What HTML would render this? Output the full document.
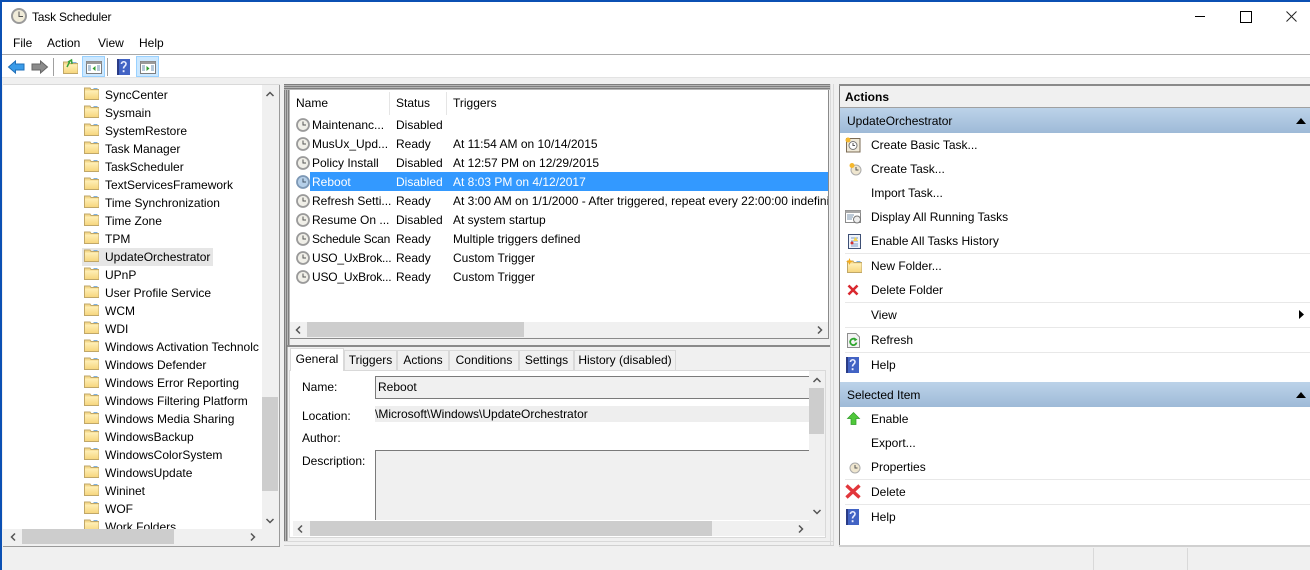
<!DOCTYPE html>
<html><head><meta charset="utf-8"><title>Task Scheduler</title>
<style>
html,body{margin:0;padding:0;width:1310px;height:570px;overflow:hidden;background:#f0f0f0}
body{position:relative;font:12px/16px "Liberation Sans",sans-serif;color:#000}
.a{position:absolute}
.t{position:absolute;white-space:nowrap}
.f{position:absolute;left:83px;width:15px;height:13px}
svg{position:absolute;overflow:visible}
.ln{position:absolute;background:#e8e8e8;height:1px;left:845px;right:0}
.gh{position:absolute;left:840px;right:0;height:25px;background:linear-gradient(#bcd3e9,#9ebad7)}
.sb{position:absolute;background:#f0f0f0}
.th{position:absolute;background:#cdcdcd}
.tab{position:absolute;top:350px;height:20px;background:#f0f0f0;border:1px solid #d9d9d9;border-bottom:none;box-sizing:border-box;text-align:center;line-height:19px}
</style></head><body>
<svg width="0" height="0" style="position:absolute"><defs>
<linearGradient id="fg" x1="0" y1="0" x2="0" y2="1"><stop offset="0" stop-color="#fff0b8"/><stop offset="1" stop-color="#f7d67f"/></linearGradient>
<symbol id="fd" viewBox="0 0 15 13"><path d="M.5 12.500V1h5.500l1 1.500h8v10z" fill="#f5d98c" stroke="#c0a768"/><path d="M1 3.500h13.500v8.500H1z" fill="url(#fg)"/><path d="M9.500 1h4v1h-4z" fill="#7fb2df"/></symbol>
<symbol id="ck" viewBox="0 0 14 14"><circle cx="7" cy="7" r="6" fill="#f0efe8" stroke="#9a9a9a" stroke-width="1.800"/><path d="M7 3.500V7H10" fill="none" stroke="#555" stroke-width="1"/></symbol>
<symbol id="qm" viewBox="0 0 13 16"><rect width="13" height="16" fill="#4263c4"/><rect x="0" width="2" height="16" fill="#2a3c86"/><path d="M4.500 5c0-3 4.500-3 4.500 0 0 2-2.500 2-2.500 4.500" fill="none" stroke="#e8ecff" stroke-width="1.600"/><rect x="5.700" y="11.200" width="1.800" height="2" fill="#e8ecff"/></symbol>
</defs></svg>

<!-- window frame -->
<div class="a" style="left:0;top:0;width:1310px;height:2px;background:#0b50b3"></div>
<div class="a" style="left:0;top:0;width:2px;height:570px;background:#0b50b3"></div>
<div class="a" style="left:2px;top:2px;width:1308px;height:76px;background:#fff"></div>
<div class="a" style="left:2px;top:54px;width:1308px;height:1px;background:#a9a9a9"></div>
<div class="a" style="left:2px;top:77px;width:1308px;height:1px;background:#e3e3e3"></div>

<svg style="left:11px;top:8px" width="16" height="16" viewBox="0 0 16 16"><circle cx="8" cy="8" r="7" fill="#f1ecd9" stroke="#9a9a9a" stroke-width="2"/><path d="M8 3.500V8.500H12" fill="none" stroke="#555"/></svg>
<div class="t" style="left:32px;top:9px;letter-spacing:-.2px">Task Scheduler</div>
<div class="t" style="left:13px;top:35px">File</div>
<div class="t" style="left:47px;top:35px">Action</div>
<div class="t" style="left:98px;top:35px">View</div>
<div class="t" style="left:139px;top:35px">Help</div>

<!-- window buttons -->
<div class="a" style="left:1195px;top:16px;width:10px;height:1px;background:#000"></div>
<div class="a" style="left:1240px;top:11px;width:10px;height:10px;border:1px solid #000"></div>
<svg style="left:1286px;top:11px" width="11" height="11"><path d="M.5.500L10.500 10.500M10.500.500L.5 10.500" stroke="#222"/></svg>

<!-- toolbar -->
<svg style="left:8px;top:60px" width="17" height="14" viewBox="0 0 17 14"><path d="M.5 7L7.500 1V4H16V10H7.500V13z" fill="#3a9be8" stroke="#1f6fb8"/></svg>
<svg style="left:31px;top:60px" width="17" height="14" viewBox="0 0 17 14"><path d="M16.500 7L9.500 1V4H1V10H9.500V13z" fill="#8b8b8b" stroke="#666"/></svg>
<div class="a" style="left:53px;top:58px;width:1px;height:18px;background:#a0a0a0"></div>
<svg style="left:63px;top:61px" width="15" height="13"><use href="#fd"/></svg>
<svg style="left:66px;top:59px" width="8" height="9"><path d="M1 8L4 2M2 3L5.500 1L6 5" fill="none" stroke="#3aa33a" stroke-width="1.500"/></svg>
<div class="a" style="left:82px;top:56px;width:23px;height:21px;background:#cce8ff;border:1px solid #99d1ff;box-sizing:border-box"></div>
<svg style="left:86px;top:61px" width="16" height="13" viewBox="0 0 16 13"><rect x=".5" y=".5" width="15" height="12" fill="#fff" stroke="#7d7d7d"/><rect x=".5" y=".5" width="15" height="2.500" fill="#9a9a9a"/><path d="M2 5h3M2 7h3M2 9h3M11 5h3M11 7h3M11 9h3" stroke="#6a8fb0"/><path d="M9.500 5V10L6.500 7.500z" fill="#2f9e2f"/></svg>
<div class="a" style="left:107px;top:58px;width:1px;height:18px;background:#a0a0a0"></div>
<svg style="left:117px;top:59px" width="13" height="16"><use href="#qm"/></svg>
<div class="a" style="left:136px;top:56px;width:23px;height:21px;background:#cce8ff;border:1px solid #99d1ff;box-sizing:border-box"></div>
<svg style="left:140px;top:61px" width="16" height="13" viewBox="0 0 16 13"><rect x=".5" y=".5" width="15" height="12" fill="#fff" stroke="#7d7d7d"/><rect x=".5" y=".5" width="15" height="2.500" fill="#9a9a9a"/><path d="M2 5h3M2 7h3M2 9h3M11 5h3M11 7h3M11 9h3" stroke="#6a8fb0"/><path d="M6.500 5V10L9.500 7.500z" fill="#2f9e2f"/></svg>

<!-- left tree -->
<div class="a" style="left:3px;top:85px;width:259px;height:444px;background:#fff;overflow:hidden" id="tree">
<div class="a" style="left:79px;top:163px;width:131px;height:18px;background:#e6e6e6"></div>
<style>.r{position:absolute;left:102px;white-space:nowrap;margin-top:1px}#tree .f{left:81px}</style>
<svg class="f" style="top:2px"><use href="#fd"/></svg><div class="r" style="top:1px">SyncCenter</div>
<svg class="f" style="top:20px"><use href="#fd"/></svg><div class="r" style="top:19px">Sysmain</div>
<svg class="f" style="top:38px"><use href="#fd"/></svg><div class="r" style="top:37px">SystemRestore</div>
<svg class="f" style="top:56px"><use href="#fd"/></svg><div class="r" style="top:55px">Task Manager</div>
<svg class="f" style="top:74px"><use href="#fd"/></svg><div class="r" style="top:73px">TaskScheduler</div>
<svg class="f" style="top:92px"><use href="#fd"/></svg><div class="r" style="top:91px">TextServicesFramework</div>
<svg class="f" style="top:110px"><use href="#fd"/></svg><div class="r" style="top:109px">Time Synchronization</div>
<svg class="f" style="top:128px"><use href="#fd"/></svg><div class="r" style="top:127px">Time Zone</div>
<svg class="f" style="top:146px"><use href="#fd"/></svg><div class="r" style="top:145px">TPM</div>
<svg class="f" style="top:164px"><use href="#fd"/></svg><div class="r" style="top:163px">UpdateOrchestrator</div>
<svg class="f" style="top:182px"><use href="#fd"/></svg><div class="r" style="top:181px">UPnP</div>
<svg class="f" style="top:200px"><use href="#fd"/></svg><div class="r" style="top:199px">User Profile Service</div>
<svg class="f" style="top:218px"><use href="#fd"/></svg><div class="r" style="top:217px">WCM</div>
<svg class="f" style="top:236px"><use href="#fd"/></svg><div class="r" style="top:235px">WDI</div>
<svg class="f" style="top:254px"><use href="#fd"/></svg><div class="r" style="top:253px">Windows Activation Technolc</div>
<svg class="f" style="top:272px"><use href="#fd"/></svg><div class="r" style="top:271px">Windows Defender</div>
<svg class="f" style="top:290px"><use href="#fd"/></svg><div class="r" style="top:289px">Windows Error Reporting</div>
<svg class="f" style="top:308px"><use href="#fd"/></svg><div class="r" style="top:307px">Windows Filtering Platform</div>
<svg class="f" style="top:326px"><use href="#fd"/></svg><div class="r" style="top:325px">Windows Media Sharing</div>
<svg class="f" style="top:344px"><use href="#fd"/></svg><div class="r" style="top:343px">WindowsBackup</div>
<svg class="f" style="top:362px"><use href="#fd"/></svg><div class="r" style="top:361px">WindowsColorSystem</div>
<svg class="f" style="top:380px"><use href="#fd"/></svg><div class="r" style="top:379px">WindowsUpdate</div>
<svg class="f" style="top:398px"><use href="#fd"/></svg><div class="r" style="top:397px">Wininet</div>
<svg class="f" style="top:416px"><use href="#fd"/></svg><div class="r" style="top:415px">WOF</div>
<svg class="f" style="top:434px"><use href="#fd"/></svg><div class="r" style="top:433px">Work Folders</div>
</div>
<div class="sb" style="left:262px;top:85px;width:16px;height:444px"></div>
<div class="th" style="left:262px;top:397px;width:16px;height:94px"></div>
<svg style="left:266px;top:91px" width="8" height="6"><path d="M.5 5L4 1.500 7.500 5" fill="none" stroke="#555" stroke-width="1.500"/></svg>
<svg style="left:266px;top:518px" width="8" height="6"><path d="M.5 1L4 4.500 7.500 1" fill="none" stroke="#555" stroke-width="1.500"/></svg>
<div class="sb" style="left:3px;top:529px;width:275px;height:16px"></div>
<div class="th" style="left:22px;top:529px;width:152px;height:15px"></div>
<svg style="left:10px;top:533px" width="6" height="8"><path d="M5 .5L1.500 4 5 7.500" fill="none" stroke="#555" stroke-width="1.500"/></svg>
<svg style="left:250px;top:533px" width="6" height="8"><path d="M1 .5L4.500 4 1 7.500" fill="none" stroke="#555" stroke-width="1.500"/></svg>
<div class="a" style="left:3px;top:546px;width:277px;height:1px;background:#9a9a9a"></div>
<div class="a" style="left:279px;top:84px;width:1px;height:463px;background:#9a9a9a"></div>
<div class="a" style="left:3px;top:84px;width:277px;height:1px;background:#d9d9d9"></div>

<!-- center panel frame -->
<div class="a" style="left:284px;top:84px;width:6px;height:262px;background:repeating-linear-gradient(90deg,#7e7e7e 0 1px,#b5b5b5 1px 2px)"></div>
<div class="a" style="left:284px;top:346px;width:4px;height:195px;background:repeating-linear-gradient(90deg,#7e7e7e 0 1px,#b5b5b5 1px 2px)"></div>
<div class="a" style="left:284px;top:84px;width:546px;height:6px;background:repeating-linear-gradient(180deg,#7e7e7e 0 1px,#b5b5b5 1px 2px)"></div>
<div class="a" style="left:290px;top:90px;width:538px;height:248px;background:#fff;overflow:hidden" id="list">
<style>
#list .t{line-height:16px}
.c1{left:22px}.c2{left:106px}.c3{left:163px}
</style>
<div class="a" style="left:99px;top:2px;width:1px;height:23px;background:#e5e5e5"></div>
<div class="a" style="left:156px;top:2px;width:1px;height:23px;background:#e5e5e5"></div>
<div class="t" style="left:6px;top:5px">Name</div><div class="t c2" style="top:5px">Status</div><div class="t c3" style="top:5px">Triggers</div>
<div class="a" style="left:20px;top:82px;width:519px;height:19px;background:#3399ff"></div>
<svg style="left:6px;top:28px" width="14" height="14"><use href="#ck"/></svg><div class="t c1" style="top:27px">Maintenanc...</div><div class="t c2" style="top:27px">Disabled</div>
<svg style="left:6px;top:47px" width="14" height="14"><use href="#ck"/></svg><div class="t c1" style="top:46px">MusUx_Upd...</div><div class="t c2" style="top:46px">Ready</div><div class="t c3" style="top:46px">At 11:54 AM on 10/14/2015</div>
<svg style="left:6px;top:66px" width="14" height="14"><use href="#ck"/></svg><div class="t c1" style="top:65px">Policy Install</div><div class="t c2" style="top:65px">Disabled</div><div class="t c3" style="top:65px">At 12:57 PM on 12/29/2015</div>
<svg style="left:6px;top:85px" width="14" height="14"><circle cx="7" cy="7" r="6" fill="#b5cfe8" stroke="#7d98b5" stroke-width="1.800"/><path d="M7 3.500V7H10" fill="none" stroke="#456"/></svg><div class="t c1" style="top:84px;color:#fff">Reboot</div><div class="t c2" style="top:84px;color:#fff">Disabled</div><div class="t c3" style="top:84px;color:#fff">At 8:03 PM on 4/12/2017</div>
<svg style="left:6px;top:104px" width="14" height="14"><use href="#ck"/></svg><div class="t c1" style="top:103px">Refresh Setti...</div><div class="t c2" style="top:103px">Ready</div><div class="t c3" style="top:103px">At 3:00 AM on 1/1/2000 - After triggered, repeat every 22:00:00 indefinitely.</div>
<svg style="left:6px;top:123px" width="14" height="14"><use href="#ck"/></svg><div class="t c1" style="top:122px">Resume On ...</div><div class="t c2" style="top:122px">Disabled</div><div class="t c3" style="top:122px">At system startup</div>
<svg style="left:6px;top:142px" width="14" height="14"><use href="#ck"/></svg><div class="t c1" style="top:141px;letter-spacing:-.2px">Schedule Scan</div><div class="t c2" style="top:141px">Ready</div><div class="t c3" style="top:141px">Multiple triggers defined</div>
<svg style="left:6px;top:161px" width="14" height="14"><use href="#ck"/></svg><div class="t c1" style="top:160px;letter-spacing:-.2px">USO_UxBrok...</div><div class="t c2" style="top:160px">Ready</div><div class="t c3" style="top:160px">Custom Trigger</div>
<svg style="left:6px;top:180px" width="14" height="14"><use href="#ck"/></svg><div class="t c1" style="top:179px;letter-spacing:-.2px">USO_UxBrok...</div><div class="t c2" style="top:179px">Ready</div><div class="t c3" style="top:179px">Custom Trigger</div>
<div class="sb" style="left:0;top:232px;width:538px;height:16px"></div>
<div class="th" style="left:17px;top:232px;width:217px;height:15px"></div>
<svg style="left:5px;top:236px" width="6" height="8"><path d="M5 .5L1.500 4 5 7.500" fill="none" stroke="#555" stroke-width="1.500"/></svg>
<svg style="left:527px;top:236px" width="6" height="8"><path d="M1 .5L4.500 4 1 7.500" fill="none" stroke="#555" stroke-width="1.500"/></svg>
</div>
<div class="a" style="left:828px;top:90px;width:1px;height:249px;background:#8a8a8a"></div>
<div class="a" style="left:290px;top:338px;width:539px;height:1px;background:#8a8a8a"></div>
<div class="a" style="left:830px;top:84px;width:1px;height:462px;background:#d9d9d9"></div>
<div class="a" style="left:833px;top:84px;width:1px;height:462px;background:#d9d9d9"></div>
<div class="a" style="left:287px;top:345px;width:543px;height:2px;background:#8a8a8a"></div>

<!-- details -->
<div class="a" style="left:288px;top:347px;width:542px;height:194px;background:#f0f0f0"></div>
<div class="a" style="left:289px;top:370px;width:537px;height:168px;background:#fff;border:1px solid #d9d9d9;box-sizing:border-box"></div>
<div class="a" style="left:290px;top:348px;width:54px;height:23px;background:#fff;border:1px solid #d9d9d9;border-bottom:none;box-sizing:border-box;text-align:center;line-height:21px">General</div>
<div class="tab" style="left:344px;width:53px">Triggers</div>
<div class="tab" style="left:397px;width:52px">Actions</div>
<div class="tab" style="left:449px;width:70px">Conditions</div>
<div class="tab" style="left:519px;width:55px">Settings</div>
<div class="tab" style="left:574px;width:102px">History (disabled)</div>
<div class="a" style="left:291px;top:371px;width:518px;height:149px;overflow:hidden;background:#fff">
<div class="t" style="left:11px;top:8px">Name:</div>
<div class="a" style="left:84px;top:5px;width:434px;height:23px;border:1px solid #7a7a7a;border-right:none;box-sizing:border-box;background:#f0f0f0"></div>
<div class="t" style="left:87px;top:8px">Reboot</div>
<div class="a" style="left:84px;top:35px;width:434px;height:16px;background:#eee"></div>
<div class="t" style="left:84px;top:35px">\Microsoft\Windows\UpdateOrchestrator</div>
<div class="t" style="left:11px;top:37px">Location:</div>
<div class="t" style="left:11px;top:59px">Author:</div>
<div class="t" style="left:11px;top:82px">Description:</div>
<div class="a" style="left:84px;top:79px;width:434px;height:71px;border:1px solid #7a7a7a;border-width:1px 0 0 1px;box-sizing:border-box;background:#f0f0f0"></div>
</div>
<div class="sb" style="left:809px;top:371px;width:16px;height:150px"></div>
<div class="th" style="left:809px;top:388px;width:15px;height:46px"></div>
<svg style="left:813px;top:377px" width="8" height="6"><path d="M.5 5L4 1.500 7.500 5" fill="none" stroke="#555" stroke-width="1.500"/></svg>
<svg style="left:813px;top:509px" width="8" height="6"><path d="M.5 1L4 4.500 7.500 1" fill="none" stroke="#555" stroke-width="1.500"/></svg>
<div class="a" style="left:293px;top:521px;width:532px;height:15px;background:#f0f0f0"></div>
<div class="th" style="left:310px;top:521px;width:402px;height:15px"></div>
<svg style="left:297px;top:525px" width="6" height="8"><path d="M5 .5L1.500 4 5 7.500" fill="none" stroke="#555" stroke-width="1.500"/></svg>
<svg style="left:798px;top:525px" width="6" height="8"><path d="M1 .5L4.500 4 1 7.500" fill="none" stroke="#555" stroke-width="1.500"/></svg>
<div class="a" style="left:284px;top:541px;width:550px;height:1px;background:#d9d9d9"></div>
<div class="a" style="left:284px;top:545px;width:550px;height:1px;background:#d0d0d0"></div>

<!-- actions pane -->
<div class="a" style="left:839px;top:84px;width:471px;height:462px;background:#fff"></div>
<div class="a" style="left:839px;top:84px;width:1px;height:462px;background:#7e7e7e"></div>
<div class="a" style="left:839px;top:84px;width:471px;height:2px;background:#8a8a8a"></div>
<div class="a" style="left:840px;top:86px;width:470px;height:21px;background:#f0f0f0"></div>
<div class="a" style="left:840px;top:107px;width:470px;height:1px;background:#a0a0a0"></div>
<div class="t" style="left:845px;top:89px;font-weight:bold">Actions</div>
<div class="gh" style="top:108px"></div>
<div class="t" style="left:847px;top:113px">UpdateOrchestrator</div>
<svg style="left:1296px;top:118px" width="10" height="6"><path d="M0 6L5 0 10 6z" fill="#000"/></svg>

<div class="t" style="left:871px;top:137px">Create Basic Task...</div>
<div class="t" style="left:871px;top:161px">Create Task...</div>
<div class="t" style="left:871px;top:185px">Import Task...</div>
<div class="t" style="left:871px;top:209px">Display All Running Tasks</div>
<div class="t" style="left:871px;top:233px">Enable All Tasks History</div>
<div class="ln" style="top:253px"></div>
<div class="t" style="left:871px;top:258px">New Folder...</div>
<div class="t" style="left:871px;top:282px">Delete Folder</div>
<div class="ln" style="top:302px"></div>
<div class="t" style="left:871px;top:307px">View</div>
<svg style="left:1299px;top:310px" width="5" height="9"><path d="M0 0L5 4.500 0 9z" fill="#000"/></svg>
<div class="ln" style="top:327px"></div>
<div class="t" style="left:871px;top:332px">Refresh</div>
<div class="ln" style="top:352px"></div>
<div class="t" style="left:871px;top:357px">Help</div>
<div class="gh" style="top:382px"></div>
<div class="t" style="left:847px;top:387px">Selected Item</div>
<svg style="left:1296px;top:392px" width="10" height="6"><path d="M0 6L5 0 10 6z" fill="#000"/></svg>
<div class="t" style="left:871px;top:411px">Enable</div>
<div class="t" style="left:871px;top:435px">Export...</div>
<div class="t" style="left:871px;top:459px">Properties</div>
<div class="ln" style="top:479px"></div>
<div class="t" style="left:871px;top:484px">Delete</div>
<div class="ln" style="top:504px"></div>
<div class="t" style="left:871px;top:509px">Help</div>

<!-- action icons -->
<svg style="left:845px;top:137px" width="16" height="16" viewBox="0 0 16 16"><rect x="1.500" y="1.500" width="13.500" height="13.500" fill="#efe9d8" stroke="#7b6b55"/><circle cx="8" cy="8.500" r="4" fill="#fff" stroke="#777"/><path d="M8 6V8.500H10" fill="none" stroke="#555"/><circle cx="3" cy="3" r="2.500" fill="#f5b82e"/></svg>
<svg style="left:848px;top:162px" width="14" height="14" viewBox="0 0 14 14"><circle cx="8" cy="8" r="5" fill="#efe6cf" stroke="#aaa"/><path d="M8 5V8H10.500" fill="none" stroke="#555"/><circle cx="4" cy="3.500" r="2.500" fill="#f5b82e"/></svg>
<svg style="left:845px;top:210px" width="17" height="14" viewBox="0 0 17 14"><rect x=".5" y=".5" width="15" height="12" fill="#fff" stroke="#8a8a8a"/><rect x=".5" y=".5" width="15" height="2.500" fill="#a8a8a8"/><path d="M2 5h7M2 7h6M2 9h5" stroke="#7a93ad"/><circle cx="12" cy="9.500" r="3.500" fill="#eee" stroke="#777"/></svg>
<svg style="left:847px;top:234px" width="14" height="15" viewBox="0 0 14 15"><rect x="1.500" y=".5" width="12" height="14" fill="#eef3fb" stroke="#3d4f74"/><path d="M4 4h7M4 7h7M4 10h7M4 12h7" stroke="#7d9cc4"/><circle cx="5" cy="9" r="1.500" fill="#d23030"/><path d="M8.500 3L11 7H6z" fill="#f6d34a"/></svg>
<svg style="left:847px;top:260px" width="15" height="13"><use href="#fd"/></svg>
<svg style="left:846px;top:258px" width="7" height="7"><path d="M3.500 0L4.500 2.500 7 3.500 4.500 4.500 3.500 7 2.500 4.500 0 3.500 2.500 2.500z" fill="#f3ab1d"/></svg>
<svg style="left:847px;top:284px" width="12" height="12" viewBox="0 0 12 12"><path d="M1.500 1.500L10.500 10.500M10.500 1.500L1.500 10.500" stroke="#d9282f" stroke-width="2.600"/></svg>
<svg style="left:847px;top:333px" width="13" height="15" viewBox="0 0 13 15"><path d="M.5.500H9L12.500 4V14.500H.5z" fill="#f3f3f3" stroke="#8e8e8e"/><path d="M9.500 9.500A3.200 3.200 0 1 1 8.500 6.500" fill="none" stroke="#2ea52e" stroke-width="1.800"/><path d="M7 4.500L10.500 6.500 7.500 8.500z" fill="#2ea52e"/></svg>
<svg style="left:846px;top:357px" width="13" height="16"><use href="#qm"/></svg>
<svg style="left:847px;top:412px" width="13" height="13" viewBox="0 0 13 13"><path d="M6.500.5L12.500 6.500H9V12.500H4V6.500H.5z" fill="#4fc83a" stroke="#2e9a26" stroke-width=".7"/></svg>
<svg style="left:848px;top:461px" width="14" height="14" viewBox="0 0 14 14"><circle cx="7" cy="7" r="5" fill="#efe6cf" stroke="#aaa"/><path d="M7 4V7H9.500" fill="none" stroke="#555"/></svg>
<svg style="left:845px;top:484px" width="16" height="15" viewBox="0 0 16 15"><path d="M1.500 1.500L14.500 13.500M14.500 1.500L1.500 13.500" stroke="#e2363b" stroke-width="3.400"/></svg>
<svg style="left:846px;top:509px" width="13" height="16"><use href="#qm"/></svg>

<!-- bottom -->
<div class="a" style="left:839px;top:545px;width:471px;height:2px;background:#d0d0d0"></div>
<div class="a" style="left:1093px;top:548px;width:1px;height:22px;background:#d9d9d9"></div>
<div class="a" style="left:1187px;top:548px;width:1px;height:22px;background:#d9d9d9"></div>
</body></html>
